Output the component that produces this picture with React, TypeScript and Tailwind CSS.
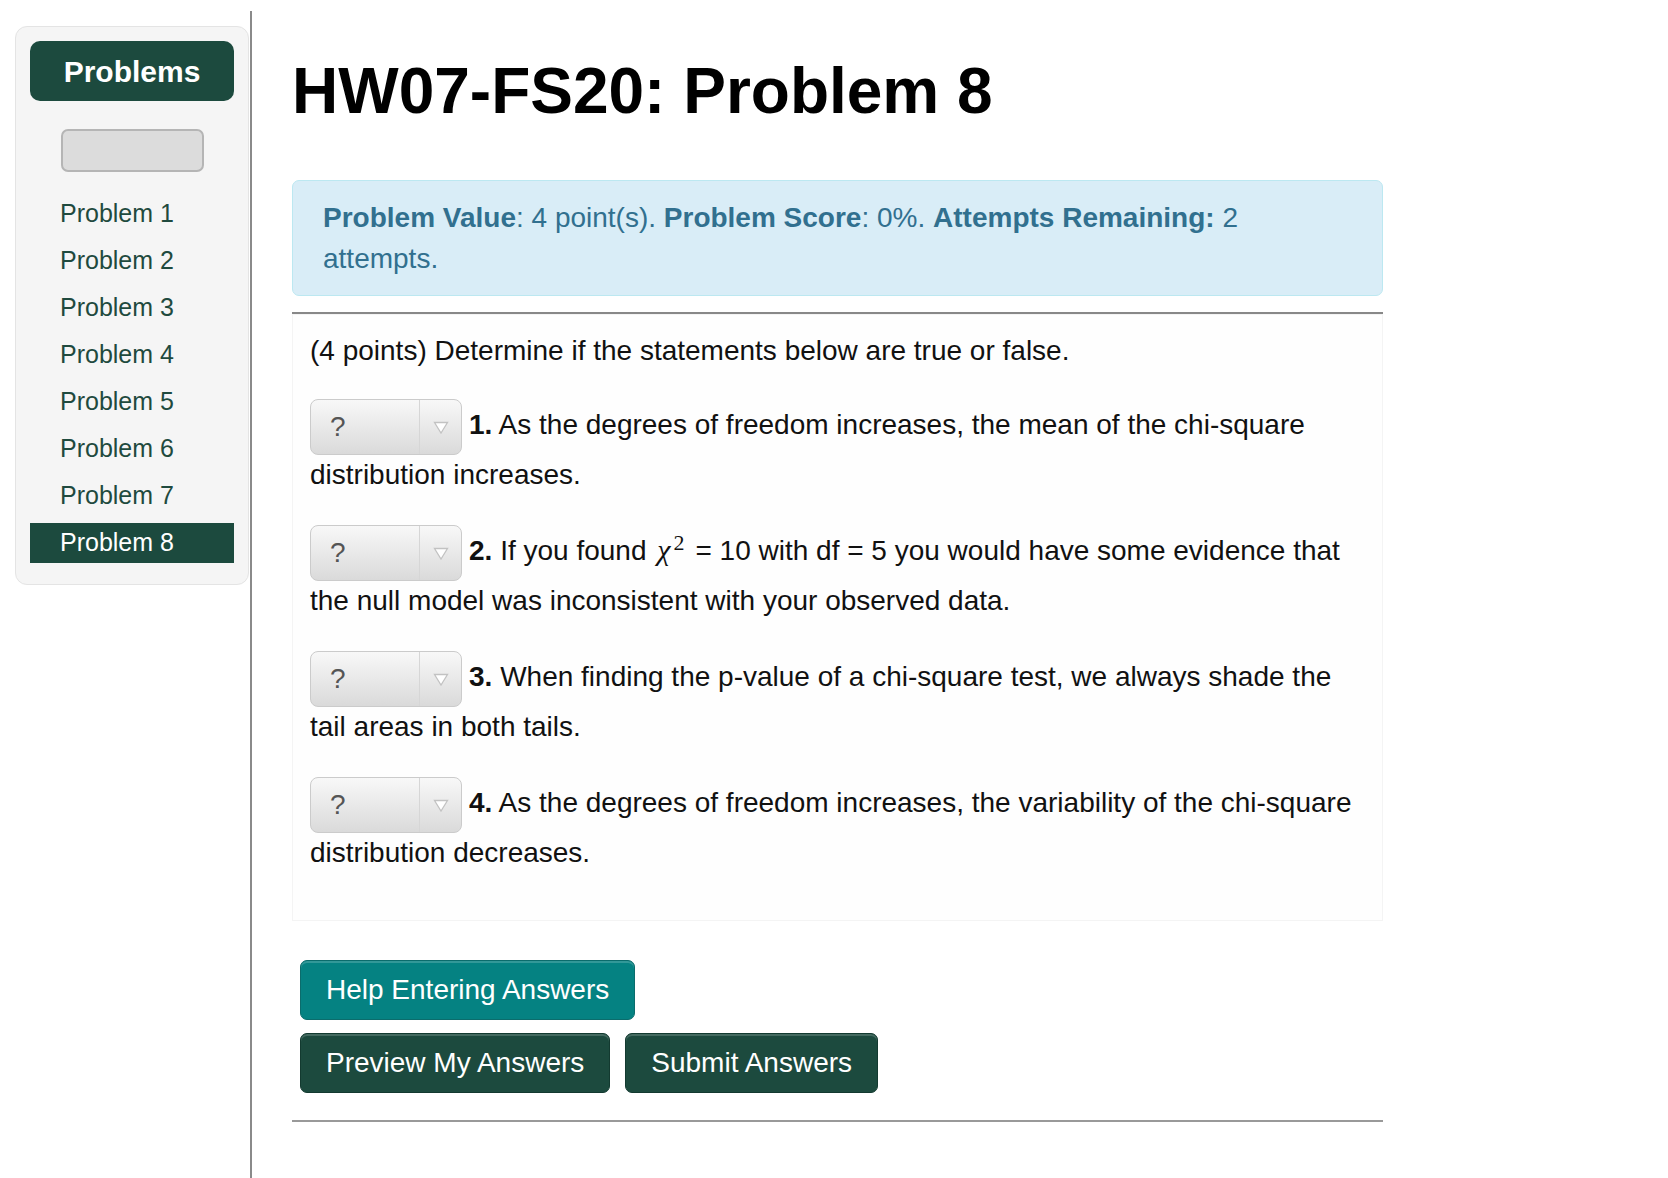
import React from "react"

const problems = [1, 2, 3, 4, 5, 6, 7, 8]
const current = 8

function AnswerSelect() {
  return (
    <span className="inline-flex align-middle w-[152px] h-[56px] mr-[7px] rounded-[8px] border border-[#cbcbcb] bg-linear-to-b from-[#f8f8f8] to-[#dadada] overflow-hidden">
      <span className="flex-1 flex items-center pl-[19px] text-[28px] text-[#555]">?</span>
      <span className="w-[42px] flex items-center justify-center border-l border-[#d6d6d6]">
        <svg width="16" height="13" viewBox="0 0 16 13">
          <polygon points="1.5,1.5 14.5,1.5 8,12" fill="#fff" stroke="#c2c2c2" strokeWidth="1.3" />
        </svg>
      </span>
    </span>
  )
}

function Chi() {
  return (
    <span className="font-['Liberation_Serif',serif] mx-[3px]">
      <span className="italic text-[30px]">χ</span>
      <sup className="text-[22px] relative top-[-10px] ml-[3px] mr-[8px]">2</sup>
    </span>
  )
}

export default function App() {
  return (
    <div className="flex min-h-[1178px] bg-white text-[#111] font-['Liberation_Sans',Arial,sans-serif]">
      {/* sidebar */}
      <aside className="w-[250px] shrink-0 pl-[15px] pt-[26px]">
        <div className="w-[234px] rounded-[12px] border border-[#e4e4e4] bg-[#f5f5f5] px-[14px] pt-[14px] pb-[21px]">
          <div className="h-[60px] rounded-[10px] bg-[#1c4a3e] flex items-center justify-center text-white font-bold text-[30px]">
            Problems
          </div>
          <div className="mx-auto mt-[28px] w-[143px] h-[43px] rounded-[7px] border-2 border-[#b5b5b5] bg-[#dcdcdc]" />
          <ul className="mt-[22px] flex flex-col gap-[7px]">
            {problems.map((n) => (
              <li
                key={n}
                className={
                  n === current
                    ? "h-[40px] flex items-center pl-[30px] text-[25px] bg-[#1c4a3e] text-white"
                    : "h-[40px] flex items-center pl-[30px] text-[25px] text-[#1f4a3e]"
                }
              >
                Problem {n}
              </li>
            ))}
          </ul>
        </div>
      </aside>

      <div className="w-[2px] shrink-0 mt-[11px] bg-[#8a8a8a]" />

      {/* main */}
      <main className="ml-[40px] w-[1091px] pt-[56px]">
        <h1 className="text-[64px] leading-[70px] font-bold text-black">HW07-FS20: Problem 8</h1>

        <div className="mt-[54px] rounded-[7px] border border-[#bce8f1] bg-[#d9edf7] pl-[30px] pr-[60px] py-[16px] text-[28px] leading-[41px] text-[#31708f]">
          <b>Problem Value</b>: 4 point(s). <b>Problem Score</b>: 0%. <b>Attempts Remaining:</b> 2 attempts.
        </div>

        <div className="mt-[16px] h-[2px] bg-[#888]" />

        <div className="border border-[#f4f4f4] bg-[#fefefe] pl-[17px] pr-[14px] pt-[16px] pb-[47px] text-[28px] leading-[40px] text-[#111]">
          <p>(4 points) Determine if the statements below are true or false.</p>

          <p className="mt-[28px]">
            <AnswerSelect />
            <b>1.</b> As the degrees of freedom increases, the mean of the chi-square distribution increases.
          </p>
          <p className="mt-[30px]">
            <AnswerSelect />
            <b>2.</b> If you found <Chi />= 10 with df = 5 you would have some evidence that the null model was
            inconsistent with your observed data.
          </p>
          <p className="mt-[30px]">
            <AnswerSelect />
            <b>3.</b> When finding the p-value of a chi-square test, we always shade the tail areas in both tails.
          </p>
          <p className="mt-[30px]">
            <AnswerSelect />
            <b>4.</b> As the degrees of freedom increases, the variability of the chi-square distribution decreases.
          </p>
        </div>

        <div className="mt-[39px] pl-[8px]">
          <button className="h-[60px] px-[25px] rounded-[7px] border border-[#0b6c6c] bg-[#058282] text-white text-[28px] shadow-[inset_0_2px_0_rgba(255,255,255,0.18)]">
            Help Entering Answers
          </button>
          <div className="mt-[13px] flex gap-[15px]">
            <button className="h-[60px] px-[25px] rounded-[7px] border border-[#133a30] bg-[#1c4a3e] text-white text-[28px] shadow-[inset_0_2px_0_rgba(255,255,255,0.18)]">
              Preview My Answers
            </button>
            <button className="h-[60px] px-[25px] rounded-[7px] border border-[#133a30] bg-[#1c4a3e] text-white text-[28px] shadow-[inset_0_2px_0_rgba(255,255,255,0.18)]">
              Submit Answers
            </button>
          </div>
        </div>

        <div className="mt-[27px] h-[2px] bg-[#999]" />
      </main>
    </div>
  )
}
